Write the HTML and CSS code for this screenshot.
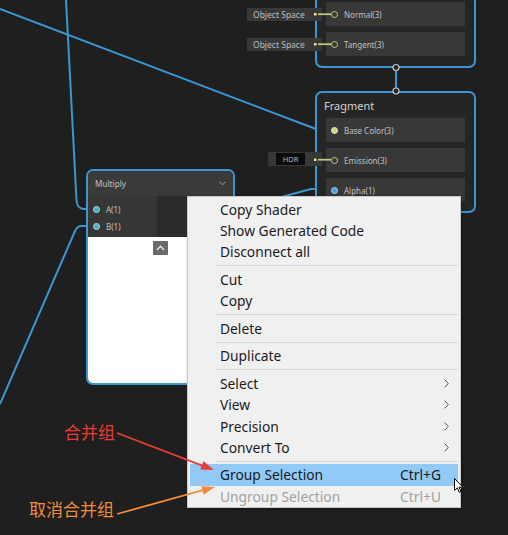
FILE: index.html
```html
<!DOCTYPE html>
<html>
<head>
<meta charset="utf-8">
<link rel="stylesheet" href="styles.css">
</head>
<body>
<div class="canvas">
  <svg class="layer" width="508" height="535" viewBox="0 0 508 535">
    <g fill="none" stroke="#3b97d3" stroke-width="2">
      <path d="M0 9 L316 129"/>
      <path d="M66 0 L76.5 200 Q77 209 84 209 L88 209"/>
      <path d="M88 226 L82 226 Q77 226 75 231 L0 404"/>
      <path d="M233 210 L311 189 L317 189"/>
    </g>
  </svg>

  <div class="node vertex">
    <div class="slot"><span class="port ring"></span><span>Normal(3)</span></div>
    <div class="slot"><span class="port ring"></span><span>Tangent(3)</span></div>
  </div>
  <div class="chip space s1">Object Space</div>
  <div class="chip space s2">Object Space</div>

  <div class="node fragment">
    <div class="node-title">Fragment</div>
    <div class="slot"><span class="port fill-yellow"></span><span>Base Color(3)</span></div>
    <div class="slot"><span class="port ring"></span><span>Emission(3)</span></div>
    <div class="slot"><span class="port fill-blue"></span><span>Alpha(1)</span></div>
  </div>
  <div class="chip hdr"><span class="hdr-field">HDR</span></div>

  <div class="node multiply">
    <div class="mul-head">
      <span class="mul-name">Multiply</span>
      <svg width="7" height="5" viewBox="0 0 7 5"><path d="M0.5 0.8 L3.5 3.8 L6.5 0.8" fill="none" stroke="#a8a8a8" stroke-width="1"/></svg>
    </div>
    <div class="mul-io">
      <div class="mul-inputs">
        <div class="in"><span class="port teal"></span><span>A(1)</span></div>
        <div class="in"><span class="port teal"></span><span>B(1)</span></div>
      </div>
      <div class="mul-outputs"></div>
    </div>
    <div class="mul-preview">
      <span class="collapse"><svg width="9" height="6" viewBox="0 0 9 6"><path d="M0.8 5 L4.5 1.3 L8.2 5" fill="none" stroke="#e6e6e6" stroke-width="1.4"/></svg></span>
    </div>
  </div>

  <svg class="layer" width="508" height="535" viewBox="0 0 508 535">
    <line x1="396" y1="68" x2="396" y2="91" stroke="#3b97d3" stroke-width="2"/>
    <circle cx="396" cy="67.5" r="3" fill="#252525" stroke="#c8c8c8" stroke-width="1.2"/>
    <circle cx="396" cy="91" r="3" fill="#252525" stroke="#c8c8c8" stroke-width="1.2"/>
    <g fill="#e4e49c">
      <rect x="314" y="13" width="2.5" height="2.5"/>
      <rect x="314" y="43" width="2.5" height="2.5"/>
      <rect x="314" y="158.5" width="2.5" height="2.5"/>
    </g>
    <g stroke="#c3c87c" stroke-width="1.8">
      <line x1="318" y1="14.2" x2="331" y2="14.2"/>
      <line x1="318" y1="44.2" x2="331" y2="44.2"/>
      <line x1="318" y1="159.7" x2="331" y2="159.7"/>
    </g>
  </svg>

  <div class="menu">
    <div class="item"><span class="label">Copy Shader</span></div>
    <div class="item"><span class="label">Show Generated Code</span></div>
    <div class="item"><span class="label">Disconnect all</span></div>
    <div class="sep"></div>
    <div class="item"><span class="label">Cut</span></div>
    <div class="item"><span class="label">Copy</span></div>
    <div class="sep"></div>
    <div class="item"><span class="label">Delete</span></div>
    <div class="sep"></div>
    <div class="item"><span class="label">Duplicate</span></div>
    <div class="sep"></div>
    <div class="item"><span class="label">Select</span><span class="sub"><svg width="5" height="9" viewBox="0 0 5 9"><path d="M0.6 0.6 L4.3 4.5 L0.6 8.4" fill="none" stroke="#555" stroke-width="1"/></svg></span></div>
    <div class="item"><span class="label">View</span><span class="sub"><svg width="5" height="9" viewBox="0 0 5 9"><path d="M0.6 0.6 L4.3 4.5 L0.6 8.4" fill="none" stroke="#555" stroke-width="1"/></svg></span></div>
    <div class="item"><span class="label">Precision</span><span class="sub"><svg width="5" height="9" viewBox="0 0 5 9"><path d="M0.6 0.6 L4.3 4.5 L0.6 8.4" fill="none" stroke="#555" stroke-width="1"/></svg></span></div>
    <div class="item"><span class="label">Convert To</span><span class="sub"><svg width="5" height="9" viewBox="0 0 5 9"><path d="M0.6 0.6 L4.3 4.5 L0.6 8.4" fill="none" stroke="#555" stroke-width="1"/></svg></span></div>
    <div class="sep"></div>
    <div class="item active"><span class="label">Group Selection</span><span class="key">Ctrl+G</span><span class="sub"></span></div>
    <div class="item disabled"><span class="label">Ungroup Selection</span><span class="key">Ctrl+U</span><span class="sub"></span></div>
  </div>

  <svg class="layer" width="508" height="535" viewBox="0 0 508 535">
    <line x1="117" y1="433" x2="203" y2="465.8" stroke="#ee3b36" stroke-width="1.8"/>
    <polygon points="214,470 200.3,469.6 203.5,461.2" fill="#ee3b36"/>
    <line x1="117" y1="514" x2="203" y2="490.2" stroke="#f08c3a" stroke-width="1.8"/>
    <polygon points="215,487 203.7,494.8 201.3,486.2" fill="#f08c3a"/>
  </svg>
  <div class="note note-red">合并组</div>
  <div class="note note-orange">取消合并组</div>

  <svg class="cursor" width="11" height="16" viewBox="0 0 11 16">
    <path d="M0.5 0.5 L0.5 12.5 L3.3 9.8 L5.3 14.3 L7 13.5 L5 9.2 L8.8 9.2 Z" fill="#fff" stroke="#000" stroke-width="1" stroke-linejoin="round"/>
  </svg>
</div>
</body>
</html>
```

FILE: styles.css
```css
body {
  margin: 0;
  background: #1f1f1f;
}

.canvas {
  position: relative;
  width: 508px;
  height: 535px;
  overflow: hidden;
  background: #1f1f1f;
  font-family: "Noto Sans", "Liberation Sans", sans-serif;
}

.layer {
  position: absolute;
  left: 0;
  top: 0;
}

/* graph nodes */
.node {
  position: absolute;
  box-sizing: border-box;
  border: 2px solid #3b97d3;
  border-radius: 7px;
  background: #252525;
}

.vertex {
  left: 315px;
  top: -30px;
  width: 161px;
  height: 98px;
  padding: 30px 9px 0;
  display: flex;
  flex-direction: column;
  gap: 6px;
}

.fragment {
  left: 315px;
  top: 91px;
  width: 161px;
  height: 122px;
  padding: 0 9px 9px;
  display: flex;
  flex-direction: column;
  gap: 6px;
}

.node-title {
  height: 25px;
  line-height: 25px;
  margin: 0 0 -6px -2px;
  font-size: 11px;
  color: #d2d2d2;
}

.slot {
  height: 24px;
  flex: none;
  background: #383838;
  display: flex;
  align-items: center;
  padding-left: 4.5px;
  gap: 6.5px;
  font-size: 8px;
  color: #c2c2c2;
}

.port {
  width: 7px;
  height: 7px;
  box-sizing: border-box;
  border-radius: 50%;
  flex: none;
}

.ring {
  border: 1.5px solid #c3c87c;
}

.fill-yellow {
  background: #cdd37c;
  border: 1.2px solid #e9ebb8;
}

.fill-blue {
  background: #3f9fdc;
  border: 1.2px solid #a9d3ef;
}

.teal {
  background: #49aebd;
  border: 1.2px solid #a7dde3;
}

/* property chips beside the master node */
.chip {
  position: absolute;
  box-sizing: border-box;
  background: #383838;
  color: #bdbdbd;
}

.space {
  left: 247px;
  width: 75px;
  height: 13px;
  padding-left: 6px;
  font-size: 8.5px;
  line-height: 13px;
}

.s1 { top: 8px; }
.s2 { top: 38px; }

.hdr {
  left: 268px;
  top: 152px;
  width: 54px;
  height: 14px;
  display: flex;
  align-items: center;
  padding-left: 8px;
}

.hdr-field {
  width: 29px;
  height: 12px;
  background: #0b0b0b;
  font-size: 7.5px;
  line-height: 12px;
  text-align: center;
  color: #b8b8b8;
}

/* Multiply node */
.multiply {
  left: 86px;
  top: 169px;
  width: 149px;
  height: 216px;
  display: flex;
  flex-direction: column;
  overflow: hidden;
  background: #2b2b2b;
}

.mul-head {
  height: 25px;
  flex: none;
  background: #3a3a3a;
  display: flex;
  align-items: center;
  justify-content: space-between;
  padding: 0 7px;
  font-size: 8.2px;
  color: #c4c4c4;
}

.mul-io {
  height: 41px;
  flex: none;
  display: flex;
}

.mul-inputs {
  width: 69px;
  background: #363636;
  padding-top: 4.5px;
  box-sizing: border-box;
}

.mul-outputs {
  flex: 1;
  background: #2b2b2b;
}

.in {
  height: 17px;
  display: flex;
  align-items: center;
  padding-left: 4.5px;
  gap: 6.5px;
  font-size: 8px;
  color: #c2c2c2;
}

.mul-preview {
  flex: 1;
  background: #ffffff;
  display: flex;
  justify-content: center;
  align-items: flex-start;
  padding-top: 4px;
}

.collapse {
  width: 15px;
  height: 14px;
  background: #6b6b6b;
  display: flex;
  align-items: center;
  justify-content: center;
}

/* context menu */
.menu {
  position: absolute;
  left: 187px;
  top: 196px;
  width: 274px;
  box-sizing: border-box;
  border: 1px solid #c9c9c9;
  background: #f0f0f0;
  padding: 1.6px 2px 0.5px;
  box-shadow: 1px 1px 3px rgba(0, 0, 0, 0.35);
}

.item {
  height: 21.3px;
  display: flex;
  align-items: center;
  padding: 0 9px 0 30px;
  font-size: 13.8px;
  color: #1b1b1b;
}

.label {
  flex: 1;
  white-space: nowrap;
}

.sub {
  width: 8px;
  display: flex;
  justify-content: flex-end;
}

.key {
  white-space: nowrap;
}

.item.active {
  background: #91c9f7;
}

.item.disabled {
  color: #a2a2a2;
}

.sep {
  height: 6.3px;
  margin-left: 26px;
  display: flex;
  align-items: center;
}

.sep::after {
  content: "";
  flex: 1;
  height: 1px;
  background: #d6d6d6;
}

/* annotations */
.note {
  position: absolute;
  font-family: "Noto Sans CJK SC", "Noto Sans", sans-serif;
  font-size: 17px;
  line-height: 17px;
  white-space: nowrap;
}

.note-red {
  left: 64px;
  top: 423px;
  color: #ee3b36;
}

.note-orange {
  left: 29px;
  top: 500px;
  color: #f08c3a;
}

.cursor {
  position: absolute;
  left: 454px;
  top: 478px;
}
```
